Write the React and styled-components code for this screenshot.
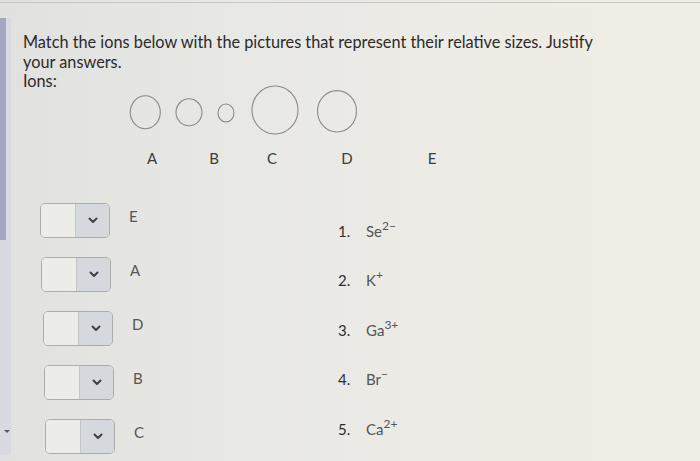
import React from "react";
import styled, { createGlobalStyle } from "styled-components";

const Global = createGlobalStyle`
  html, body { margin: 0; padding: 0; }
  body {
    width: 700px;
    height: 461px;
    overflow: hidden;
    font-family: Lato, "Open Sans", "Liberation Sans", sans-serif;
    background: linear-gradient(90deg, #e1e1df 0%, #e8e8e5 35%, #eeece5 70%, #efede6 100%);
  }
`;

const Page = styled.div`
  display: flex;
  height: 461px;
  border-top: 1px solid #c6c6c4;
  margin-top: 2px;
  box-sizing: border-box;
`;

const Scrollbar = styled.div`
  position: relative;
  width: 11px;
  height: 437px;
  margin-top: 15px;
  background: #d9dadf;
  flex-shrink: 0;
`;

const Thumb = styled.div`
  width: 6px;
  height: 222px;
  background: #a3a6bf;
`;

const ScrollArrow = styled.div`
  position: absolute;
  left: 4px;
  bottom: 22px;
  width: 0;
  height: 0;
  border-left: 3px solid transparent;
  border-right: 3px solid transparent;
  border-top: 3px solid #555a66;
`;

const Content = styled.div`
  flex: 1;
  padding: 29px 0 0 12px;
`;

const Question = styled.p`
  margin: 0;
  width: 580px;
  font-size: 16.3px;
  line-height: 19.5px;
  color: #2b2b2b;
`;

const Circles = styled.svg`
  display: block;
  margin-left: 105px;
  margin-top: -7px;
`;

const LetterRow = styled.div`
  display: flex;
  margin-top: 9px;
  height: 18px;
`;

const Letter = styled.span`
  display: inline-block;
  width: 14px;
  text-align: center;
  margin-left: ${(p) => p.$offset}px;
  font-size: 15px;
  line-height: 18px;
  color: #3c3c3c;
`;

const Matching = styled.div`
  display: flex;
  margin-top: 36px;
`;

const LeftCol = styled.div`
  width: 298px;
  padding-left: 17px;
  display: flex;
  flex-direction: column;
  gap: 19px;
`;

const SelectRow = styled.div`
  display: flex;
  align-items: flex-start;
  gap: 19px;
  margin-left: ${(p) => p.$shift}px;
`;

const Select = styled.div`
  display: flex;
  width: 70px;
  height: 35px;
  box-sizing: border-box;
  border: 1px solid #acacaa;
  border-radius: 5px;
  overflow: hidden;
`;

const SelectValue = styled.div`
  width: 34px;
  background: #ecece9;
  border-right: 1px solid #c4c6c8;
`;

const SelectButton = styled.div`
  flex: 1;
  display: flex;
  align-items: center;
  justify-content: center;
  background: #d5d8dc;
`;

const Label = styled.span`
  padding-top: 4px;
  font-size: 15px;
  line-height: 18px;
  color: #575757;
`;

const RightCol = styled.ol`
  list-style: none;
  margin: 0;
  padding: 19px 0 0 0;
  display: flex;
  flex-direction: column;
  gap: 31.5px;
`;

const Item = styled.li`
  display: flex;
  font-size: 15px;
  line-height: 18px;
`;

const Num = styled.span`
  width: 28px;
  color: #2e2e2e;
`;

const Ion = styled.span`
  color: #555;
  sup {
    font-size: 12px;
    line-height: 0;
    position: relative;
    top: -1px;
  }
`;

const Chevron = () => (
  <svg width="10" height="7" viewBox="0 0 10 7">
    <polyline points="1.5,1.5 5,5 8.5,1.5" fill="none" stroke="#3a4150" strokeWidth="2" strokeLinecap="round" strokeLinejoin="round" />
  </svg>
);

const answers = ["E", "A", "D", "B", "C"];
const ions = [
  ["Se", "2−"],
  ["K", "+"],
  ["Ga", "3+"],
  ["Br", "−"],
  ["Ca", "2+"],
];

const letters = [
  ["A", 122],
  ["B", 48],
  ["C", 44],
  ["D", 61],
  ["E", 71],
];

export default function App() {
  return (
    <>
      <Global />
      <Page>
        <Scrollbar>
          <Thumb />
          <ScrollArrow />
        </Scrollbar>
        <Content>
          <Question>
            Match the ions below with the pictures that represent their relative sizes. Justify your answers.
            <br />
            Ions:
          </Question>
          <Circles width="235" height="56" viewBox="0 0 235 56">
            <g fill="none" stroke="#8a8a8a" strokeWidth="1.1">
              <ellipse cx="17.3" cy="28.3" rx="15" ry="16.5" />
              <ellipse cx="61" cy="28.3" rx="13" ry="13.5" />
              <ellipse cx="98" cy="29" rx="8" ry="9" />
              <ellipse cx="147" cy="26" rx="23" ry="24" />
              <ellipse cx="209" cy="27.3" rx="19.5" ry="20.7" />
            </g>
          </Circles>
          <LetterRow>
            {letters.map(([l, o]) => (
              <Letter key={l} $offset={o}>{l}</Letter>
            ))}
          </LetterRow>
          <Matching>
            <LeftCol>
              {answers.map((a, i) => (
                <SelectRow key={i} $shift={Math.round(i * 1.3)}>
                  <Select>
                    <SelectValue />
                    <SelectButton>
                      <Chevron />
                    </SelectButton>
                  </Select>
                  <Label>{a}</Label>
                </SelectRow>
              ))}
            </LeftCol>
            <RightCol>
              {ions.map(([el, ch], i) => (
                <Item key={i}>
                  <Num>{i + 1}.</Num>
                  <Ion>
                    {el}
                    <sup>{ch}</sup>
                  </Ion>
                </Item>
              ))}
            </RightCol>
          </Matching>
        </Content>
      </Page>
    </>
  );
}
